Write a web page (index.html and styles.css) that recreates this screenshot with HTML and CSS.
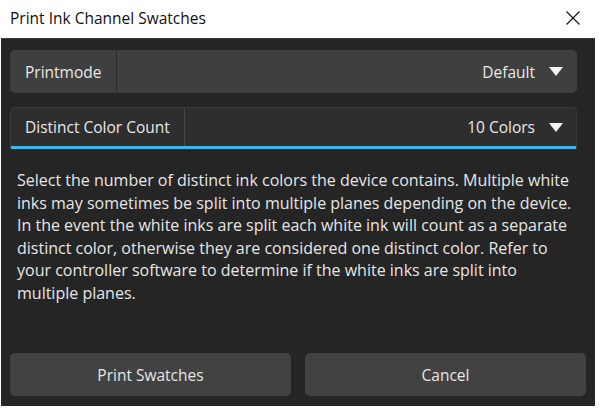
FILE: index.html
```html
<!DOCTYPE html>
<html lang="en">
<head>
    <meta charset="UTF-8">
    <meta name="viewport" content="width=device-width, initial-scale=1.0">
    <title>Print Ink Channel Swatches</title>
    <link rel="stylesheet" href="styles.css">
</head>
<body>
    <div class="window">
        <div class="titlebar">
            <span class="title">Print Ink Channel Swatches</span>
            <span class="close-btn">
                <svg width="14" height="14" viewBox="0 0 14 14">
                    <path d="M0.5 0.5 L13.5 13.5 M13.5 0.5 L0.5 13.5" stroke="#111" stroke-width="1.1" fill="none"/>
                </svg>
            </span>
        </div>
        <div class="content">
            <div class="fields">
                <div class="select-row">
                    <div class="select-label">Printmode</div>
                    <div class="select-value">
                        <span>Default</span>
                        <span class="arrow"></span>
                    </div>
                </div>
                <div class="select-row active">
                    <div class="select-label">Distinct Color Count</div>
                    <div class="select-value">
                        <span>10 Colors</span>
                        <span class="arrow"></span>
                    </div>
                </div>
                <p class="description">Select the number of distinct ink colors the device contains. Multiple white inks may sometimes be split into multiple planes depending on the device. In the event the white inks are split each white ink will count as a separate distinct color, otherwise they are considered one distinct color. Refer to your controller software to determine if the white inks are split into multiple planes.</p>
            </div>
            <div class="buttons">
                <button class="btn">Print Swatches</button>
                <button class="btn">Cancel</button>
            </div>
        </div>
    </div>
</body>
</html>
```

FILE: styles.css
```css
* {
    margin: 0;
    padding: 0;
    box-sizing: border-box;
}

body {
    background-color: #fff;
    font-family: "Open Sans", "Noto Sans", sans-serif;
    width: 599px;
    height: 415px;
    overflow: hidden;
}

.window {
    display: flex;
    flex-direction: column;
    width: 599px;
    height: 415px;
}

.titlebar {
    height: 38px;
    display: flex;
    align-items: center;
    justify-content: space-between;
    padding: 0 19px 0 10px;
    background-color: #fff;
}

.title {
    font-size: 15.5px;
    color: #111;
    margin-top: -2px;
}

.close-btn {
    display: flex;
    margin-top: -3px;
}

.content {
    width: 594px;
    height: 368px;
    margin-left: 1px;
    background-color: #252525;
    border-top: 1px solid #3a3a3a;
    display: flex;
    flex-direction: column;
    justify-content: space-between;
    padding: 11px 9px 10px 9px;
}

.fields {
    padding-right: 9px;
}

.select-row {
    display: flex;
    height: 43px;
    background-color: #3f3f3f;
    border-radius: 5px;
    color: #e8e8e8;
    font-size: 15.5px;
    margin-bottom: 14px;
}

.select-label {
    display: flex;
    align-items: center;
    padding: 0 15px;
    border-right: 1px solid #2c2c2c;
}

.select-value {
    flex: 1;
    display: flex;
    align-items: center;
    justify-content: flex-end;
    padding-right: 14px;
}

.arrow {
    width: 0;
    height: 0;
    margin-left: 14px;
    border-left: 7px solid transparent;
    border-right: 7px solid transparent;
    border-top: 9px solid #f2f2f2;
}

.select-row.active {
    height: 42px;
    background-color: #2e2e2e;
    border: 1px solid #3a3a3a;
    border-bottom: 3px solid #3fb6ea;
    border-radius: 5px 5px 2px 2px;
    margin-bottom: 20px;
}

.select-row.active .select-label {
    padding: 0 14px;
    border-right-color: #474747;
}

.select-row.active .select-value {
    padding-right: 13px;
}

.description {
    color: #e6e6e6;
    font-size: 16px;
    line-height: 22.6px;
    padding-left: 7px;
}

.buttons {
    display: flex;
    gap: 14px;
}

.btn {
    flex: 1;
    height: 43px;
    border: none;
    border-radius: 5px;
    background-color: #424242;
    color: #e6e6e6;
    font-family: "Open Sans", "Noto Sans", sans-serif;
    font-size: 15.5px;
}
```
